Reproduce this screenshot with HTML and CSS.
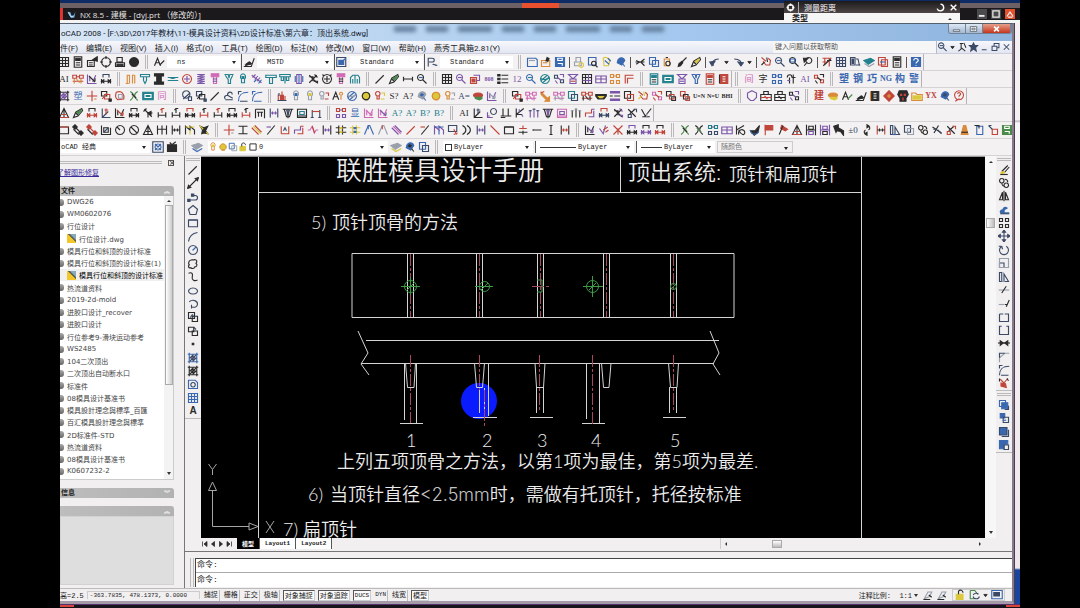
FILE: index.html
```html
<!DOCTYPE html>
<html lang="zh-CN">
<head>
    <meta charset="UTF-8">
    <meta name="viewport" content="width=device-width, initial-scale=1.0">
    <title>AutoCAD 2008</title>
    <link rel="stylesheet" href="styles.css">
</head>
<body>
<div class="desktop">
    <div class="nx">
        <div class="nx-top"><span class="red-mark"></span></div>
        <div class="nx-title">
            <svg class="nx-logo" viewBox="0 0 16 16"><path d="M1 4l5 1 2 6 4-1 3-6-2 10-6 1z" fill="#6fb4e8"/><path d="M2 5l4 7 5 1" stroke="#fff" fill="none"/></svg>
            <span>NX 8.5 - 建模 - [dyj.prt （修改的）]</span>
            <div class="nx-buttons">
                <button aria-label="最小化"><svg viewBox="0 0 16 16"><path d="M3 11h9" stroke-width="3"/></svg></button>
                <button aria-label="还原"><svg viewBox="0 0 16 16"><path d="M3 3h10v10H3z" stroke-width="2"/></svg></button>
                <button class="nx-close" aria-label="关闭"><svg viewBox="0 0 16 16"><path d="M3 12l5-7 5 7M5 13h7" stroke-width="2"/></svg></button>
            </div>
        </div>
        <div class="measure">
            <div class="measure-title">
                <svg viewBox="0 0 16 16"><circle cx="8" cy="8" r="5"/><path d="M8 1v4M8 11v4M1 8h4M11 8h4"/></svg>
                <span class="measure-name">测量距离</span>
                <button aria-label="重置"><svg viewBox="0 0 16 16"><path d="M8 2a6 6 0 1 1-6 8"/></svg></button>
                <button aria-label="关闭"><svg viewBox="0 0 16 16"><path d="M3 3l10 10M13 3L3 13"/></svg></button>
            </div>
            <div class="measure-body"><span>类型</span><i class="up"></i></div>
        </div>
    </div>

    <div class="stage">
    <div class="acad">
        <div class="titlebar">
            <span class="title-text">oCAD 2008 - [F:\3D\2017年教材\11-模具设计资料\2D设计标准\第六章：顶出系统.dwg]</span>
            <div class="glass"><i></i><i></i><i></i><i></i><i></i><i></i><i></i><i></i></div>
            <div class="win-buttons">
                <button aria-label="最小化"><svg viewBox="0 0 16 10"><path d="M4 6h8v2H4z"/></svg></button>
                <button aria-label="还原"><svg viewBox="0 0 16 10"><path d="M4 2h8v6H4zM6 4h4v2H6z"/></svg></button>
                <button class="win-close" aria-label="关闭"><svg viewBox="0 0 16 10"><path d="M5 2l6 6M11 2L5 8"/></svg></button>
            </div>
        </div>

        <div class="menubar">
            <button>件(F)</button><button>编辑(E)</button><button>视图(V)</button><button>插入(I)</button><button>格式(O)</button><button>工具(T)</button><button>绘图(D)</button><button>标注(N)</button><button>修改(M)</button><button>窗口(W)</button><button>帮助(H)</button><button>燕秀工具箱2.81(Y)</button>
            <input class="ask" type="text" placeholder="键入问题以获取帮助" aria-label="键入问题以获取帮助">
            <div class="tools ask-tools" data-tools="zoom:n drop:k person:k star:n wmin:n wmax:n wclose:n"></div>
        </div>

        <div class="row">
            <div class="tools" data-tools="table:k calc:k props:k clock:k stampdoc:k globe:k"></div>
            <div class="grip"></div>
            <div class="tools" data-tools="Apen:k"></div>
            <div class="combo w70"><select aria-label="文字样式"><option>ns</option></select></div>
            <div class="tools bar-left" data-tools="dimpen:k"></div>
            <div class="combo w74"><select aria-label="标注样式"><option>MSTD</option></select></div>
            <div class="tools bar-left" data-tools="tablepen:n:b"></div>
            <div class="combo w70"><select aria-label="表格样式"><option>Standard</option></select></div>
            <div class="tools bar-left" data-tools="leader:n"></div>
            <div class="combo w70"><select aria-label="引线样式"><option>Standard</option></select></div>
            <div class="grip"></div>
            <div class="tools" data-tools="doc:b:s folder:o:k save:b | print:s:y preview:b:k publish:y:b globe3:b | cut:k copy:b paste:o:k brush:k pencil:k:y | undo:n drop:k redo:n drop:k | hand:r:k zoom:n:b zoombox:k:b zoomprev:k | propsheet:r:k table:n pages:n layers:t:s markup:r:b calc:k | help:b"></div>
            <div class="row-end"></div>
        </div>

        <div class="row">
            <div class="tools" data-tools="=AI:k blocks:r:o graph:p:k dim:k:n"></div>
            <div class="grip"></div>
            <div class="tools" data-tools="posts:o pin:t beam:k equals:t cross:r:p coil:p screw:m:p wye:t bulb:t spring:p:b tee:t tees:t barrel:p:b gear:k target:k screw:m:k pipe:t"></div>
            <div class="grip"></div>
            <div class="tools" data-tools="line:k pencil:k:g dimline:k zoom:k:b"></div>
            <div class="grip"></div>
            <div class="tools" data-tools="table:k zoom:p cube:r:p =808:p list:k =12:p zoom:b:t globe2:t nodes:n:p stamp:p:r table:k:p table2:p tiles:o corner:r"></div>
            <div class="grip"></div>
            <div class="tools" data-tools="calc:t:k screen:t:k stamp:p wye:b calc:r:k book:r:k"></div>
            <div class="row-end"></div>
            <div class="grip"></div>
            <div class="tools" data-tools="=间:m =字:k tiles:b wrench:k:p =AI:p:r nodes:r:k"></div>
            <div class="grip"></div>
            <div class="tools strong" data-tools="=塑:b =钢:b =巧:b =NG:b =构:b =警:b"></div>
            <div class="row-end"></div>
        </div>

        <div class="row">
            <div class="tools" data-tools="hatch:k:p =塑:b plus:r:o copyset:k:r arcbox:r:s mirror:g:k screen:t:n =同:m"></div>
            <div class="grip"></div>
            <div class="tools" data-tools="circleset:n copyset:n:k line:k cloud:n fillet:b:n fillet:b"></div>
            <div class="grip"></div>
            <div class="tools" data-tools="hist:r:n bulb:s:b bulb:s:y bulbset:s:r Abulb:k:o globe2:b:s ball:y:k bulbset:r:y =S?:k =A?:k globe3:s:b ball:y:o bulbset:o:s =A=:n:y disc:r:g graph:p:s"></div>
            <div class="grip"></div>
            <div class="tools" data-tools="copyset:k:r blocks:m brushdown:o:r blocks:m:s copy:t:n blocks:r:k bowl:k:y bars:p:k copy:k:r hand:r:y nodes:m:r cubeset:k:r cubeset:r:k =U=N:k =N=U:k =BHI:k"></div>
            <div class="grip"></div>
            <div class="tools" data-tools="shield:p case:k:r case:k nodes:k:p"></div>
            <div class="grip"></div>
            <div class="tools strong" data-tools="=建:r disc:o:y Apen:k:g dimpen:k:g book:k:o diamond:r:o skull:k:r folder2:o:y =YX:r globe3:b:n bubble:r"></div>
            <div class="row-end"></div>
        </div>

        <div class="row">
            <div class="tools" data-tools="tri:k:r pencil:k:g dim:r:k axis:n:r graph:k:r dim:k dimang:k dimup:k:r dimup:k dim:k:r dimup:r:k dimup:k:r dim:k dimup:r:k comb:k dimgap:n:p funnel:k:n cube2:k:t gate:n:r"></div>
            <div class="grip"></div>
            <div class="tools" data-tools="tiles:r:p =显:b graph:m graph:m:p =A?:t =A?:t =B?:t =B?:t"></div>
            <div class="grip"></div>
            <div class="tools" data-tools="=AI:k axis:k:n circset:n:p fork:k:n ray:k:p posts2:p:n funnel:k:p cube2:m:p posts2:k:s joint:r:p dim:n:r gear:k:p scissor:k:n check:k:s"></div>
            <div class="row-end"></div>
        </div>

        <div class="row">
            <div class="tools" data-tools="rect:k:r nodeline:k nodeline:r:k graphbox:k:n dial:k dial2:k tri:k comb2:k dimgap:k flag2:k:y gearpen:k:y"></div>
            <div class="grip"></div>
            <div class="tools" data-tools="plus:r:s ibeam:k hatchl:r:y slash:k:p gate2:r:n joint:p:r zig:m:r dimgap:k:p track:k:y track:y:b peak:b peak:s:r hatchl:p:m line:r:k slash:k:r flag2:p:b rectdown:n:r arcs:k:r dimgap:n:p backslash:r rect:k plusminus:r:k minus:k bar:k dimgap:k:r"></div>
            <div class="grip"></div>
            <div class="tools" data-tools="graph:k:p raydot:p:r star6:r dim:k:p dim:p:k dim:r:k"></div>
            <div class="grip"></div>
            <div class="tools" data-tools="mirror:g:k mirror:k:g tiles:t:n table2:p graphk:k bird:k:b flag:r flagk:r:k tri:k:r tiles2:k:p tiles2:p:k arrowul:k =±0:n:r swap:k dimgap:r:k stretch:n:b copy:n:s rings:k gearx:k:n scissor:k:r cone:o:k docblue:b:k link:r:n save:g:k"></div>
        </div>

        <div class="row">
            <div class="combo space"><select aria-label="工作空间"><option>oCAD 经典</option></select></div>
            <div class="tools" data-tools="gearbox:n:b screenk:k"></div>
            <div class="grip"></div>
            <div class="tools" data-tools="layers:s:b"></div>
            <div class="combo layer">
                <div class="tools layer-state" data-tools="bulb:o:y ball:y:o copy:b:s lock:y:k square:k"></div>
                <select aria-label="图层"><option>0</option></select>
            </div>
            <div class="tools" data-tools="layers:s:y globe3:b:k copy:b:n"></div>
            <div class="grip"></div>
            <div class="combo w90"><span class="swatch"></span><select aria-label="颜色"><option>ByLayer</option></select></div>
            <div class="combo bar-left w100"><span class="dash"></span><select aria-label="线型"><option>ByLayer</option></select></div>
            <div class="combo bar-left w80"><span class="dash short"></span><select aria-label="线宽"><option>ByLayer</option></select></div>
            <div class="combo w74 off"><select aria-label="打印样式" disabled><option>随颜色</option></select></div>
        </div>

        <div class="main">
            <div class="panel">
                <div class="panel-top"><span></span><button aria-label="关闭">×</button></div>
                <a class="panel-link" href="#">了解图形修复</a>
                <div class="section">文件<b>︽</b></div>
                <div class="tree-box">
                    <ul class="tree">
                        <li>DWG26</li>
                        <li>WM0602076</li>
                        <li>行位设计</li>
                        <li class="dwg">行位设计.dwg</li>
                        <li>模具行位和斜顶的设计标准</li>
                        <li>模具行位和斜顶的设计标准(1)</li>
                        <li class="dwg current">模具行位和斜顶的设计标准</li>
                        <li>热流道资料</li>
                        <li>2019-2d-mold</li>
                        <li>进胶口设计_recover</li>
                        <li>进胶口设计</li>
                        <li>行位参考9-滑块运动参考</li>
                        <li>WS2485</li>
                        <li>104二次顶出</li>
                        <li>二次顶出自动断水口</li>
                        <li>标准件</li>
                        <li>08模具设计基准书</li>
                        <li>模具設計理念與標準_百匯</li>
                        <li>百汇模具設計理念與標準</li>
                        <li>2D标准件-STD</li>
                        <li>热流道资料</li>
                        <li>08模具设计基准书</li>
                        <li>K0607232-2</li>
                        <li>K0607193-2</li>
                    </ul>
                    <div class="tree-scroll"><i class="up"></i><span></span><i class="down"></i></div>
                </div>
                <div class="section info">信息<b>︾</b></div>
                <div class="section blank"><b>︽</b></div>
                <div class="preview"></div>
            </div>

            <div class="right">
                <div class="work">
                    <div class="side">
                        <div class="grip-h"></div>
                        <div class="tools draw" data-tools="line:k xline:k pline:n poly:n rect:n arc:n circle:n:b cloud2:k spline:k ellipse:n earc:n insert:k:n block:k:n point:k hatch:b:n hatch:k region:b:n table:b =A:k"></div>
                    </div>
                    <div class="view">
                        <svg class="canvas" viewBox="201 157 784 382" preserveAspectRatio="xMinYMin slice">
                            <g class="white">
                                <path d="M258.5 157V539M861.5 157V539M258 192.5H861M620.5 157V192"/>
                                <path d="M352 253.5H734V317.5H352z"/>
                                <path d="M407.5 254V317M413.5 254V317M476.5 254V317M482.5 254V317M537.5 254V317M543.5 254V317M603.5 254V317M609.5 254V317M670.5 254V317M676.5 254V317"/>
                                <path d="M366 340.5H719M361 363.5H714M358 331L368 353L361 364L369 375M710 331L719 353L713 364L720 375"/>
                            </g>
                            <circle class="spot" cx="479" cy="401" r="18"/>
                            <g class="white">
                                <path d="M404.5 363V420M416.5 363V423M400 423.5H423M405.5 363L407.5 387.5H414L415.5 363"/>
                                <path d="M474.5 363L476.5 387.5H482.5L484.5 363M479.5 390V413M488.5 363V416M473 417.5H497M484.5 388V416"/>
                                <path d="M535 363L536.5 387.5H543.5L545 363M536.5 387V413M543.5 387V413M530 417.5H553"/>
                                <path d="M586.5 363V419M599.5 363V423M582 423.5H605M601.5 363L603.5 387.5H609L611 363"/>
                                <path d="M668.5 363L670.5 387.5H677L678.5 363M669.5 387V413M676.5 387V413M663 417.5H686"/>
                            </g>
                            <path class="center" d="M410.5 254V317M479.5 254V317M540.5 254V317M606.5 254V317M673.5 254V317M410.5 355V423M479.5 355V390M484.5 390V426M539.5 355V412M592.5 355V426M673.5 355V412M532 286.5H550"/>
                            <g class="mark">
                                <path d="M401 286.5H420M410.5 277V295M475 286.5H493M592.5 276V297M583 286.5H603M537 280H542V292H537"/>
                                <circle cx="410.5" cy="286.5" r="6"/><circle cx="484.5" cy="286.5" r="5"/><circle cx="592.5" cy="286.5" r="6"/><circle cx="673.5" cy="286.5" r="3"/>
                                <path d="M407 290L414 283M481 290L488 283M589 290L596 283M671 289L676 284"/>
                            </g>
                            <g class="ucs">
                                <path d="M212.5 490V526.5H249M212.5 482L208.5 490.5H216.5zM258 526.5L249 523V530z"/>
                                <path d="M208.5 464L212.5 469.5V475M216.5 464L212.5 469.5M266 521L274 533M274 521L266 533"/>
                            </g>
                            <g class="drawing-text">
                                <text class="big" x="336" y="180">联胜模具设计手册</text>
                                <text class="mid" x="628" y="180">顶出系统:</text>
                                <text x="729" y="181">顶针和扁顶针</text>
                                <text x="311" y="229">5)</text><text x="332" y="229">顶针顶骨的方法</text>
                                <text x="406" y="447">1</text><text x="482" y="447">2</text><text x="537" y="447">3</text><text x="591" y="447">4</text><text x="670" y="447">5</text>
                                <text x="337" y="468">上列五项顶骨之方法，以第1项为最佳，第5项为最差.</text>
                                <text x="308" y="501">6)</text><text x="330" y="501">当顶针直径<tspan class="size">&lt;2.5mm</tspan>时，需做有托顶针，托径按标准</text>
                                <text x="283" y="536">7)</text><text x="303" y="536">扁顶针</text>
                            </g>
                        </svg>
                        <div class="tabs">
                            <div class="tools tab-nav" data-tools="first:k prev:k next:k last:k"></div>
                            <button class="tab active">模型</button>
                            <button class="tab">Layout1</button>
                            <button class="tab">Layout2</button>
                            <div class="hscroll"><i class="left"></i><span></span><i class="rightarrow"></i></div>
                        </div>
                    </div>
                    <div class="vscroll"><i class="up"></i><span></span><i class="down"></i></div>
                    <div class="side">
                        <div class="grip-h"></div>
                        <div class="tools modify" data-tools="erase:k:y rings:k mirr:k offset:n:b array:k move:n:b rotate:n scale:n:s stretch:n:s trim:s:k extend:s:k breakpt:n break:n join:k chamfer:s:n fillet:n explode:r:k"></div>
                        <div class="grip-h"></div>
                        <div class="tools order" data-tools="front:b:n back:b:n front2:n:b back2:b:n"></div>
                    </div>
                </div>
                <div class="command">
                    <div class="cmd-grip"></div>
                    <div class="cmd-lines">
                        <div class="cmd-old">命令:</div>
                        <label class="cmd-new">命令:<input type="text" aria-label="命令"></label>
                    </div>
                </div>
            </div>
        </div>

        <div class="status">
            <span>高=2.5</span>
            <span class="coords">-363.7835, 478.1373, 0.0000</span>
            <button>捕捉</button><button>栅格</button><button>正交</button><button>极轴</button><button class="on">对象捕捉</button><button class="on">对象追踪</button><button class="on latin">DUCS</button><button class="latin">DYN</button><button>线宽</button><button class="on">模型</button>
            <div class="scale">注释比例: &nbsp;1:1<i class="down"></i></div>
            <div class="tools" data-tools="annot:s:k annot:s:k"></div>
            <div class="tools tray" data-tools="lock:y:k docsync:g:n drop:k screenb:b:n"></div>
        </div>
    </div>
    <div class="behind"></div>
    </div>
    <div class="bottom"><i></i><i></i></div>
</div>
<script src="script.js"></script>
</body>
</html>
```

FILE: styles.css
```css
*{
    box-sizing: border-box;
}
body{
    margin: 0;
    background-color: black;
    font-family: Roboto, "Noto Sans CJK SC", sans-serif;
    font-size: 8px;
    color: #222;
}
button, input, select{
    font: inherit;
    color: inherit;
    border: none;
    background: none;
    padding: 0;
    margin: 0;
}
svg{
    display: block;
}
.desktop{
    margin: 0 60px;
    height: 100vh;
    display: flex;
    flex-direction: column;
    overflow: hidden;
}

/* NX window at the back */
.nx{
    position: relative;
    flex: none;
    height: 23px;
    background-color: #f4f4f4;
}
.nx-top{
    height: 8px;
    background-color: #6c6064;
    border-top: 3px solid #0e2b66;
}
.red-mark{
    display: block;
    width: 37px;
    height: 5px;
    margin: 0 auto;
    background-color: #e8502f;
}
.nx-title{
    height: 12px;
    display: flex;
    align-items: center;
    gap: 4px;
    padding: 0 1px 0 4px;
    background-color: #1b191b;
    color: #e4e4e4;
    font-family: "Open Sans", "Noto Sans CJK SC", sans-serif;
    border-left: 3px solid #d33;
}
.nx-logo{
    width: 9px;
    height: 10px;
}
.nx-buttons{
    margin-left: auto;
    margin-right: 4px;
    display: flex;
    gap: 4px;
}
.nx-buttons button{
    width: 10px;
    height: 10px;
    background-color: #4a4a4c;
}
.nx-buttons svg{
    width: 10px;
    height: 10px;
    fill: none;
    stroke: #eee;
}
.nx-buttons .nx-close{
    background-color: #e2502c;
}
.measure{
    position: absolute;
    top: 1px;
    right: 60px;
    width: 176px;
    background-color: #f6f6f6;
}
.measure-title{
    height: 12px;
    display: flex;
    align-items: center;
    padding: 0 2px;
    background: linear-gradient(#1c1a1b, #4e4646);
    color: white;
}
.measure-title svg{
    width: 9px;
    height: 9px;
    fill: none;
    stroke: white;
    stroke-width: 2.5;
}
.measure-name{
    flex: 1;
    margin-left: 3px;
    padding-left: 5px;
    border-left: 1px solid #aaa;
}
.measure-title button{
    margin-left: 4px;
}
.measure-body{
    display: flex;
    align-items: center;
    justify-content: space-between;
    padding: 1px 8px 0;
    line-height: 9px;
    font-weight: bold;
}

/* AutoCAD window */
.stage{
    position: relative;
    flex: 1;
    min-height: 0;
    display: flex;
}
.acad{
    flex: 1;
    min-width: 0;
    display: flex;
    flex-direction: column;
    background-color: #f1eff0;
    border-top: 1px solid #55606e;
    border-right: 2px solid #85798a;
    border-bottom: 3px solid #a49aa8;
    overflow: hidden;
}
.titlebar{
    flex: none;
    height: 17px;
    display: flex;
    align-items: center;
    background: linear-gradient(90deg, #d8e6f4, #bcd6f0 32%, #a6caf0 60%, #8fb4dd);
    color: #16202c;
}
.title-text{
    padding-left: 1px;
    white-space: nowrap;
}
.glass{
    align-self: flex-start;
    display: flex;
    gap: 10px;
    margin: 2px 0 0 26px;
    filter: blur(2px);
}
.glass i{
    width: 22px;
    height: 6px;
    background-color: #64809f;
}
.glass i:nth-child(3n){
    width: 34px;
}
.win-buttons{
    align-self: flex-start;
    margin-left: auto;
    display: flex;
    border: 1px solid #71849b;
    border-top: none;
    border-radius: 0 0 3px 3px;
    overflow: hidden;
}
.win-buttons button{
    width: 17px;
    height: 9px;
    background: linear-gradient(#dde8f4, #a3b8d0);
    border-right: 1px solid #71849b;
}
.win-buttons svg{
    width: 15px;
    height: 8px;
    fill: white;
    stroke: #4e5a68;
}
.win-buttons .win-close{
    width: 28px;
    background: linear-gradient(#e7a08d, #c5351b);
}
.win-close svg{
    margin: 0 auto;
    stroke: white;
    stroke-width: 2;
}
.menubar{
    flex: none;
    height: 13px;
    display: flex;
    align-items: center;
    gap: 8px;
    background: linear-gradient(#f7f8fc, #e3e6f2);
    border-bottom: 1px solid #cdd0dc;
    white-space: nowrap;
}
.menubar .ask{
    margin-left: auto;
    width: 163px;
    height: 11px;
    padding-left: 2px;
    background-color: #f6f6f6;
    font-size: 7px;
}
.ask::placeholder{
    color: #555;
}
.menubar .ask-tools{
    margin-left: -8px;
    border-left: 1px solid #b8bcc8;
}
.menubar .ask-tools button{
    width: 11px;
}

.row{
    flex: none;
    height: 17px;
    display: flex;
    align-items: stretch;
    background-color: #f3f1f2;
    border-bottom: 1px solid #d6d3d6;
}
.row > .tools:first-child{
    margin-left: -3px;
}
.tools{
    flex: none;
    display: flex;
    align-items: center;
}
.tools button{
    flex: none;
    width: 14px;
    height: 14px;
    display: flex;
    align-items: center;
    justify-content: center;
    color: var(--c1);
    font-family: "Liberation Serif", "Noto Sans CJK SC", serif;
    font-size: 9px;
    line-height: 14px;
    white-space: nowrap;
}
.tools button.wide{
    font-size: 6px;
    font-weight: bold;
}
.tools button.narrow{
    width: 9px;
}
.tools.strong button{
    font-size: 10px;
    font-weight: bold;
}
.tools.strong button.pair{
    font-size: 8px;
}
.tools svg{
    width: 12px;
    height: 12px;
    fill: none;
    stroke: var(--c1);
    stroke-width: 1.5;
}
.tools .f{
    fill: var(--c1);
}
.tools .a{
    stroke: var(--c2);
}
.tools .af{
    fill: var(--c2);
    stroke: none;
}
.tools .w{
    stroke: white;
}
.sep{
    flex: none;
    width: 1px;
    height: 11px;
    margin: 0 2px;
    background-color: #555;
}
.grip{
    flex: none;
    width: 3px;
    margin: 1px 4px;
    border-left: 1px solid #bbb8bc;
    border-right: 1px solid #bbb8bc;
}
.grip-h{
    height: 3px;
    margin: 2px 1px;
    border-top: 1px solid #bbb8bc;
    border-bottom: 1px solid #bbb8bc;
}
.row-end{
    width: 1px;
    background-color: #b5b2b6;
}
.row-end + .grip{
    margin-left: 3px;
}
.bar-left{
    border-left: 1px solid #555;
}
.combo{
    position: relative;
    flex: none;
    display: flex;
    align-items: center;
    margin: 2px 1px;
    background-color: white;
}
.combo select{
    flex: 1;
    min-width: 0;
    height: 12px;
    padding-left: 10px;
    appearance: none;
    font-family: "Liberation Mono", "Noto Sans CJK SC", monospace;
    font-size: 7px;
    opacity: 1;
}
.combo::after{
    content: "";
    position: absolute;
    right: 4px;
    top: 5px;
    border: 2px solid transparent;
    border-top: 3px solid #222;
}
.w70{
    width: 73px;
}
.w74{
    width: 76px;
}
.w80{
    width: 79px;
}
.w90{
    width: 90px;
}
.w100{
    width: 99px;
}
.combo.space{
    width: 89px;
}
.combo.space select{
    padding-left: 0;
}
.combo.layer{
    width: 180px;
    margin-left: 4px;
}
.layer select{
    padding-left: 1px;
}
.layer-state button{
    width: 10px;
}
.layer-state svg{
    width: 10px;
    height: 10px;
}
.swatch{
    width: 7px;
    height: 7px;
    margin-left: 2px;
    border: 1px solid #333;
}
.swatch + select{
    padding-left: 2px;
}
.dash{
    width: 36px;
    height: 1px;
    margin-left: 4px;
    background-color: #333;
}
.dash.short{
    width: 21px;
}
.dash + select{
    padding-left: 2px;
}
.off{
    background-color: #f3f1f2;
    border: 1px solid #ccc;
    color: #777;
}
.off select{
    padding-left: 3px;
}

/* recovery panel on the left */
.main{
    flex: 1;
    min-height: 0;
    display: flex;
}
.panel{
    flex: none;
    width: 125px;
    display: flex;
    flex-direction: column;
    padding: 2px 10px 3px 0;
    border-right: 1px solid #777;
    font-family: "DejaVu Sans", "Noto Sans CJK SC", sans-serif;
    font-size: 7px;
}
.panel-top{
    display: flex;
    align-items: center;
    gap: 6px;
    height: 9px;
}
.panel-top span{
    flex: 1;
    height: 3px;
    border-top: 1px solid #bbb;
    border-bottom: 1px solid #bbb;
}
.panel-top button{
    width: 6px;
    height: 6px;
    line-height: 5px;
    border: 1px solid #555;
}
.panel-link{
    height: 19px;
    margin-left: -3px;
    line-height: 12px;
    color: #3a2a9a;
    white-space: nowrap;
}
.section{
    flex: none;
    display: flex;
    height: 10px;
    padding: 0 4px 0 1px;
    line-height: 10px;
    font-weight: bold;
    background: linear-gradient(90deg, #bdbdbd, #b2b2b2);
    border-radius: 0 3px 0 0;
}
.section b{
    color: #eee;
    margin-left: auto;
    font-size: 6px;
}
.tree-box{
    flex: none;
    height: 284px;
    display: flex;
    background-color: white;
    border-right: 1px solid #ccc;
    border-bottom: 1px solid #ccc;
    overflow: hidden;
}
.tree{
    flex: 1;
    min-width: 0;
    margin: 0;
    padding: 0;
    list-style: none;
    overflow: hidden;
}
.tree li{
    display: flex;
    align-items: center;
    gap: 3px;
    height: 12px;
    white-space: nowrap;
    color: #444;
}
.tree li:nth-child(4n){
    height: 13px;
}
.tree li::before{
    content: "";
    flex: none;
    width: 4px;
    height: 7px;
    border-radius: 0 3px 3px 0;
    background: linear-gradient(#aaa, #666);
}
.tree .dwg::before{
    width: 9px;
    height: 9px;
    margin-left: 7px;
    border-radius: 0;
    background: linear-gradient(45deg, #f2c72c 55%, #333 56%, #8ab 70%);
}
.tree .current{
    color: black;
    background-color: #f0f0f0;
}
.tree-scroll{
    flex: none;
    width: 9px;
    display: flex;
    flex-direction: column;
    align-items: center;
    padding: 4px 0;
    background-color: #f3f3f3;
}
.tree-scroll span{
    width: 8px;
    height: 180px;
    margin: 3px 0 auto;
    background: linear-gradient(90deg, #fff, #ccc);
    border: 1px solid #aaa;
}
.up, .down, .left, .rightarrow{
    flex: none;
    width: 0;
    height: 0;
    border: 2px solid transparent;
}
.up{
    border-top: none;
    border-bottom-color: #333;
}
.down{
    border-bottom: none;
    border-top: 3px solid #333;
}
.left{
    border-left: none;
    border-right-color: #333;
}
.rightarrow{
    border-right: none;
    border-left-color: #333;
}
.info, .blank{
    margin-top: 8px;
}
.preview{
    flex: 1;
    background-color: #dedede;
    border: 1px solid #d2d2d2;
}

/* drawing area */
.right{
    flex: 1;
    min-width: 0;
    display: flex;
    flex-direction: column;
}
.work{
    flex: 1;
    min-height: 0;
    display: flex;
    border-bottom: 1px solid #777;
}
.side{
    flex: none;
    width: 16px;
}
.side .tools{
    flex-direction: column;
    border-bottom: 1px solid #bbb;
}
.side .tools button{
    flex: 1;
    height: auto;
    font-family: "Liberation Sans", sans-serif;
    font-size: 10px;
    font-weight: bold;
    line-height: 10px;
}
.draw{
    height: 256px;
}
.modify{
    height: 228px;
}
.order{
    height: 55px;
}
.view{
    flex: 1;
    min-width: 0;
    display: flex;
    flex-direction: column;
    border-top: 1px solid #999;
}
.canvas{
    flex: 1;
    min-height: 0;
    width: 100%;
    background-color: black;
}
.white{
    fill: none;
    stroke: #d4d4d4;
}
.spot{
    fill: #0a1cff;
}
.center{
    fill: none;
    stroke: #a8485c;
    stroke-dasharray: 12 2 3 2;
}
.mark{
    fill: none;
    stroke: #3f9a45;
}
.ucs{
    fill: none;
    stroke: #a5a5a5;
}
.drawing-text{
    font-family: Lato, "Noto Sans CJK SC", sans-serif;
    font-weight: 350;
    font-size: 18px;
    fill: #ececec;
}
.drawing-text .big{
    font-size: 26px;
}
.drawing-text .mid{
    font-size: 22px;
}
.size{
    font-family: Inter, sans-serif;
    font-weight: 300;
    fill: #c4c4c4;
}
.tabs{
    flex: none;
    height: 13px;
    display: flex;
    padding-bottom: 2px;
}
.tab-nav button{
    width: 8px;
    height: 10px;
}
.tab-nav svg{
    width: 8px;
    height: 8px;
}
.tab{
    padding: 0 5px;
    font-family: "Liberation Mono", "Noto Sans CJK SC", monospace;
    font-size: 6px;
    font-weight: bold;
    background-color: white;
    border-right: 1px solid #555;
}
.tab.active{
    margin-left: 4px;
    background-color: black;
    color: white;
}
.hscroll{
    flex: 1;
    display: flex;
    align-items: center;
    margin-left: 388px;
    border-left: 1px solid #ccc;
    padding: 0 4px;
}
.hscroll span{
    width: 10px;
    height: 8px;
    margin-left: 45px;
    margin-right: auto;
    background: linear-gradient(#fff, #bbb);
    border: 1px solid #aaa;
}
.vscroll{
    flex: none;
    width: 11px;
    display: flex;
    flex-direction: column;
    align-items: center;
    margin-bottom: 13px;
    padding: 5px 0 4px;
    background-color: #f7f7f7;
}
.vscroll span{
    width: 9px;
    height: 10px;
    margin-top: 55px;
    margin-bottom: auto;
    background: linear-gradient(90deg, #fff, #bbb);
    border: 1px solid #aaa;
}

/* command lines and status */
.command{
    flex: none;
    height: 36px;
    display: flex;
    padding: 6px 0 1px 5px;
}
.cmd-grip{
    width: 4px;
    border-left: 1px solid #bbb;
    border-right: 1px solid #bbb;
    margin-right: 1px;
}
.cmd-lines{
    flex: 1;
    background-color: white;
    border-left: 1px solid #444;
    border-top: 1px solid #444;
    font-family: "Liberation Mono", "Noto Sans CJK SC", monospace;
}
.cmd-old, .cmd-new{
    display: flex;
    height: 14px;
    padding-left: 1px;
    line-height: 12px;
    border-bottom: 1px solid #aaa;
}
.cmd-new{
    border-bottom: none;
    line-height: 14px;
}
.cmd-new input{
    flex: 1;
}
.status{
    flex: none;
    height: 13px;
    display: flex;
    align-items: center;
    gap: 3px;
    padding-right: 7px;
    border-top: 1px solid #bbb;
    font-family: "Liberation Mono", "Noto Sans CJK SC", monospace;
    font-size: 7px;
    white-space: nowrap;
}
.coords{
    width: 113px;
    padding-left: 2px;
    border: 1px solid #ccc;
    border-bottom: none;
    font-size: 6px;
}
.status > button{
    padding: 0 1px;
    height: 11px;
    line-height: 10px;
    border-right: 1px solid #bbb;
}
.status > .on{
    border: 1px solid #555;
    border-right-color: #ccc;
    border-bottom-color: #ccc;
    background-color: #fafafa;
}
.status > .latin{
    font-size: 6px;
}
.scale{
    display: flex;
    align-items: center;
    gap: 2px;
    margin-left: auto;
}
.tray{
    border: 1px solid #ccc;
    height: 12px;
}

/* slice of the window behind, and the bottom edge */
.behind{
    flex: none;
    width: 6px;
    border-left: 1px solid #4a3f4c;
    background: linear-gradient(#f3eff2 97px, #b9b0bb 98px, #f8f6f8 100px, #eee6ec 545px, #1745a0 547px);
}
.bottom{
    flex: none;
    height: 4px;
    display: flex;
    justify-content: space-between;
    background-color: #17141c;
    border-top: 1px solid #55306a;
}
.bottom i{
    width: 14px;
    height: 2px;
    background-color: #d8433a;
}
```

FILE: script.js
```js
const colors = {
    k: '#2b2b2b', n: '#3a4a66', b: '#3a68b0', t: '#23808e', g: '#4a8a4a', r: '#c0453a',
    o: '#d98a3a', y: '#dcc83c', m: '#cf6ab4', p: '#7a55a8', s: '#98a0ac'
};

// plain strokes use the first colour, a: accent stroke, f: filled, af: accent filled, w: white stroke
const shapes = {
    line: 'M2 14L13 3', xline: 'M1 15L15 1 f:M1 15l1-4 3 3zM15 1l-1 4-3-3z', slash: 'M3 14L13 2 a:M2 4h6', backslash: 'M2 2L14 14',
    pline: 'M2 12h9a3 3 0 0 0 0-6H7 f:M1 11h3v3H1zM6 4h3v3H6z', poly: 'M8 2l6 5-2 7H4L2 7z', rect: 'M2 4h12v9H2z a:M2 4h12',
    arc: 'M2 14C3 7 7 3 14 2', circle: 'M8 2a6 6 0 1 0 .1 0 a:M8 8l4-4M7 8h2',
    cloud2: 'M5 3c2-2 3 1 5-1 3 0 4 3 2 5 3 3 0 5-2 5 0 3-4 2-5 1-3 1-4-2-2-4-2-2 0-6 2-6', spline: 'M2 3c5-2 6 1 5 5s3 6 7 4',
    ellipse: 'M8 4a6 4 0 1 0 .1 0', earc: 'M3 5c5-4 11-1 11 3s-4 5-8 4 M6 9v5', insert: 'M2 2h8v8H2zM7 7h7v7H7z a:M4 9l3-4 3 4',
    block: 'M2 3h7v6H2zM7 8h7v6H7z a:M9 3l3 3', point: 'f:M7 7h2v2H7z', hatch: 'M3 1v14M13 1v14M1 3h14M1 13h14 a:M3 8h10M8 3v10M4 12l8-8M4 8l4-4M8 12l4-4',
    region: 'M2 3h9l3 3v8H2z a:M8 6a3 3 0 1 0 .1 0', table: 'M2 2h12v12H2zM2 6h12M6 2v12 a:M2 10h12M10 2v12', table2: 'M1 4h14v9H1zM1 8h14M8 4v9',
    calc: 'M3 1h10v14H3z f:M5 3h6v3H5z a:M5 9h6M5 12h6', props: 'M2 6h9v8H2zM4 9h5M4 12h5 f:M9 5l6-4v6z', clock: 'M8 2a6 6 0 1 0 .1 0M8 0v4M8 12v4M0 8h4M12 8h4',
    stampdoc: 'M4 2h7v6H4zM2 9h12v5H2z f:M4 11h8v2H4z', globe: 'f:M8 2a6 6 0 1 0 .1 0z a:M3 6h9M4 10h8', globe2: 'M8 2a6 6 0 1 0 .1 0M3 10L11 3M5 13l8-7 a:M2 7c4 3 8 2 12-1',
    globe3: 'f:M4 5c3-4 8-3 9 1l-4 6-6-3z af:M7 4l4 2-3 3-3-2z a:M10 10l3 4', Apen: 'M2 13L6 3l4 10M4 9h5 a:M9 12l6-6', dimpen: 'M1 14h10l4-11 M3 13L9 8l2 2z f:M4 11l4-3 2 3z',
    tablepen: 'M1 2h12v12H1z a:M4 11l9-8 af:M3 5h8v7H3z', leader: 'M3 14V3h5c4 0 4 5 0 5H4M9 12c2-3 3 2 6 0',
    doc: 'M2 3h11l2 2v9H2z a:M4 6h8', folder: 'M2 6h11v8H2z af:M9 1l4 2-2 5-4-1z M4 9h6', folder2: 'M1 4h5l2 2h7v8H1z af:M2 7h12v6H2z', save: 'f:M2 2h12v12H2z w:M5 3h6v3H5z w:M5 10h6v3',
    print: 'M4 2h6v6H4zM2 8h9v5H2z a:M11 9a3 3 0 1 0 .1 0', preview: 'M2 2h10v10H2z a:M9 7a3 3 0 1 0 .1 0M11 12l3 3', publish: 'M3 3c4-3 7 0 9 2l-2 8H4z a:M5 6l6 5M9 3l4 4',
    cut: 'M2 8h12M9 8l5-4M9 8l5 5 M3 6l4 2-4 3', copy: 'M2 2h8v9H2z a:M6 6h8v8H6z', paste: 'M3 4h7v9H3z a:M8 7a3 3 0 1 0 .1 0M5 2h3', brush: 'M14 2L8 8 f:M3 14l1-4 4-3 1 2-3 4z',
    pencil: 'M2 14l3-7 8-5 1 3-6 7z af:M6 7l6-4 1 2-5 6z M5 8l3 3', undo: 'M6 13c-3-5 0-9 7-9 f:M1 8l7-1-4 6z', redo: 'M11 13c3-5-1-9-8-9 f:M15 9l-7-1 4 5z', drop: 'f:M5 7h6l-3 4z',
    hand: 'M2 2l6 5M4 7l4 5h5l1-6-3-3 a:M2 12l4-4M9 2l1 6', zoom: 'M6 2a4 4 0 1 0 .1 0zM9 9l5 5 a:M4 6h5', zoombox: 'M6 2a4 4 0 1 0 .1 0zM9 9l5 5 a:M3 4h6v4H3z', zoomprev: 'M9 2a4 4 0 1 0 .1 0 M3 13l4-5 f:M2 3h6l-5 5z',
    propsheet: 'M2 3h12M5 3v8M11 3v11M2 8h6 a:M3 13l10-9M8 6h6', pages: 'M2 2h6v10H2z f:M4 4h2v6H4z M9 4h3l2 9M9 12h6', layers: 'f:M1 6l9-3 5 3-8 5z a:M2 10l6 4 7-4', markup: 'M2 2h9v10H2zM6 5h8v9H6z a:M4 8h7',
    help: 'f:M2 2h12v12H2z w:M5 6c0-4 6-3 6 0 0 2-3 1-3 4M8 12v1', blocks: 'M1 3h5v4H1zM10 3h5v4h-5zM1 11h14M6 5h4 a:M3 8v6M12 8v6M6 8l4 5', graph: 'M2 2v12h12M5 11V5M9 12L13 3 a:M4 4l8 8M12 11V7',
    dim: 'M2 14V8M14 14V8M2 11h12 f:M2 11l3-2v4zM14 11l-3-2v4z a:M4 6V2h8v4', dimup: 'M3 14V7M13 14V7M3 11h10 a:M8 2v6M6 4l2-2h3', posts: 'M3 14V3h3v11M10 14V3h3M13 3v11M1 14h4', pin: 'M2 2h12v3H2zM6 5v5M10 5v5l-2 4-2-4',
    beam: 'f:M2 1h12v3H2zM2 12h12v3H2zM5 4h6v8H5z', equals: 'M1 6h14M1 10h14 M4 6c4 3 4 1 8 0', cross: 'M8 2a6 6 0 1 0 .1 0 a:M4 8h8M8 4v8', coil: 'M3 2h10L3 5h10L3 8h10L3 11h10L3 14h10', screw: 'f:M3 1h10v4H3z M6 5v9h4V5 a:M5 8h6M5 11h6',
    wye: 'M2 2h5l1 5 1-5h5M3 3l4 6v5h3V9l3-6', bulb: 'M8 1a4 4 0 0 0-2 7v5h4V8a4 4 0 0 0-2-7 af:M6 4h4v4H6z', spring: 'M1 3l13 10M2 6l4-4M5 9l4-5M8 11l4-5 a:M10 14l4-5M4 12l3-3', tee: 'M1 3h14v3H1zM6 6v8h4V6', tees: 'M1 2h14v3H1zM3 5v5h3V5M10 5v5h3V5M8 5v9',
    barrel: 'M5 2h6v12H5z a:M3 4v8M13 4v8M8 2v12', gear: 'M3 3l10 10M3 13L13 3M3 5h5v6 a:M10 2l4 4M9 11h5v3', target: 'M8 2a6 6 0 1 0 .1 0M4 8h8M8 4v8M2 2l2 2M14 2l-2 2', pipe: 'M2 14V6l3-3h7l2 3v8M5 14V8M11 14V8M8 3v11', dimline: 'M2 5v6M14 5v6M2 8h12',
    cube: 'M2 6h8v8H2z a:M6 3h8v7h-4 f:M4 8h4v4H4z', list: 'M6 3h9M6 8h9M6 13h9 f:M1 2h3v2H1zM1 7h3v2H1zM1 12h3v2H1z', nodes: 'M2 3h4v4H2zM10 9h4v4h-4z a:M6 6l5 4M9 2h5v4M3 10l3 4', stamp: 'M2 2h12L8 8zM4 8h8v6H4z a:M5 11h6',
    tiles: 'M2 2h4v4H2zM10 2h4v4h-4z a:M2 10h4v4H2zM10 10h4v4h-4zM6 4h4', tiles2: 'M2 1v14M14 1v14M5 3h6v4H5zM2 8h12 a:M5 10h6v4H5z', corner: 'M3 14V3h11M6 14V7h8', screen: 'f:M1 3h14v10H1z w:M4 6h8v4H4z', screenk: 'f:M2 5h12v9H2z a:M5 2l3 3 5-4',
    screenb: 'M1 2h14v11H1z af:M3 4h9v6H3z', book: 'f:M3 2h10v12H3z w:M6 5h4M6 8h4M6 11h4 a:M2 2v12', wrench: 'M3 6c0-5 7-5 6 0M6 6v8M11 2v12M9 6h5 a:M3 10h4',
    plus: 'M8 1v14M1 8h14 a:M11 12h3', copyset: 'M2 2h7v6H2z a:M6 6h7v6H6zM3 12l6-8 f:M12 12h3v3h-3z', arcbox: 'M3 3c8-3 11 3 10 9l-8 1c-4-3-3-6-2-10 a:M6 6h5v5H6z', mirror: 'M3 2c6 3 5 8 0 12M13 2c-6 3-5 8 0 12 a:M5 5l6 6',
    circleset: 'M7 1a5 5 0 1 0 .1 0M3 12l9-8 M10 9h4v5h-4z', cloud: 'M3 12c-3-4 2-5 3-5 0-6 7-5 6-1M3 13h10M6 7l7 4', fillet: 'M2 15C2 6 6 3 15 3 a:M4 15h10M2 6V2h4', hist: 'M3 14V6M8 14V2M12 14V8 f:M6 7h4v7H6z a:M2 14h12M4 4v4',
    bulbset: 'M5 2a3 3 0 1 0 .1 0M4 8v4h3V8 a:M10 4h4v4M9 12h5', Abulb: 'M1 13L5 3l4 10M3 9h4 a:M12 3a2 2 0 1 0 .1 0M12 8v5', ball: 'f:M8 3a5 5 0 1 0 .1 0z a:M6 13h5 a:M8 3a5 5 0 1 0 .1 0', disc: 'f:M8 4a6 3 0 1 0 .1 0z af:M3 9h11v3l-4 2-6-2z',
    brushdown: 'f:M3 3l8 8 3-2v6H8l2-2-7-7z a:M2 4l5-2', bowl: 'f:M1 6h14v2l-3 4H4L1 8z af:M3 8h10l-3 3H6z', bars: 'f:M2 2h12v2H2zM2 12h12v2H2z a:M1 8h4M7 8h8', cubeset: 'M2 2h6v6H2z a:M6 6h6v6H6z M9 9h5v5H9z',
    shield: 'M8 1l6 3v6l-4 4H6l-4-4V4z', case: 'M1 6h14v8H1zM5 6V2h6v4 a:M1 10h14M6 8l4 4', diamond: 'f:M8 1l7 7-7 7-7-7z af:M8 5l3 3-3 3-3-3z', skull: 'f:M3 1h10l2 5-3 5v4H4v-4L1 6z af:M4 5h3v3H4zM9 5h3v3H9zM7 10h2v4H7z', bubble: 'M8 1a6 6 0 1 0 .1 0M6 5c1-3 5-1 4 1l-2 2v1M8 11v1M6 13l-3 2',
    tri: 'M8 2l6 12H2zM8 2v12 a:M2 14h12M5 10h6', axis: 'M3 2v12h11M3 14l8-8 a:M8 2v8M6 4h5', dimang: 'M3 3l10 10M6 2l-4 4M14 8H8v6 f:M8 8l4-2v4z', comb: 'M2 3h12M2 3v12M6 7v6M10 7v6M14 3v12M4 7h8', comb2: 'M2 2v12M8 2v12M14 2v12M2 7h12',
    dimgap: 'M3 2v12M13 2v12 a:M3 8h10M6 6v4M10 6v4', funnel: 'M1 3h14M3 3l3 10h4l3-10M8 3v12 a:M6 3l2 8 2-8', cube2: 'M2 3h12v11H2z a:M5 6h6v4H5z M2 12h12', gate: 'M3 14V4M13 14V4M1 14h4M11 14h4 a:M3 6h10', gate2: 'M3 13V3M3 13h10V3 a:M6 9l2-4 2 4',
    circset: 'M10 2a4 4 0 1 0 .1 0 a:M2 12h3M2 7v7h7', fork: 'M4 2v10M11 2v10M1 12h14M1 14h6', ray: 'M3 2v12M3 10l10-8M3 10h8 a:M7 3v5M10 10l2 3', posts2: 'M3 4v10M8 2v12M13 4v10 a:M1 5h4M6 3h4M11 5h4', joint: 'M2 13V8h8V3 a:M6 13h7V5M10 3h4',
    scissor: 'M3 3l10 10M12 3L5 9 a:M3 10h4v4H3zM10 3h4v4', check: 'M2 3l5 9 8-10M3 13h10 a:M9 8v6', nodeline: 'M4 4l8 8 f:M1 4l3-3 3 3-3 3zM9 12l3-3 3 3-3 3z a:M2 7l7 7', graphbox: 'M2 2v12h12V5M5 5h6v6H5z a:M5 11l6-6', dial: 'M8 2a6 6 0 1 0 .1 0M8 8L4 4', dial2: 'M8 2a6 6 0 1 0 .1 0M4 4l8 8',
    flag2: 'M2 14V3l6 5V3l6 5v6 a:M2 4h12M8 8v6', gearpen: 'f:M3 3l5 2 5-2-3 6 3 4-5-1-3 1 1-5z a:M2 2l5 5M11 11l3 3', ibeam: 'M2 3h12M2 13h12M8 3v10', hatchl: 'M1 5l9 9M5 2l9 9 a:M3 3l10 10', zig: 'M1 8h3l3-5 3 9 2-4h3 a:M7 3l3 9', track: 'M1 5h14M1 11h14M5 2v12M10 2v12 af:M6 4h4v3H6zM6 9h4v3H6z',
    peak: 'M2 14L7 2h2l5 12 a:M7 2v5', rectdown: 'M2 2h11v8H2z a:M9 7l4 7M9 14l5-2', arcs: 'M2 2c6 3 6 9 0 12M8 2c6 3 6 9 0 12', plusminus: 'M3 6h10M8 2v5 a:M2 11h12M8 9v5', minus: 'M2 8h12M3 7v2', bar: 'M8 2v12M6 2h4M6 14h4', raydot: 'M2 6l5 7 3-11 a:M7 8l6-4M10 11l4-3', star6: 'M2 2l12 12M14 2L2 14M8 6v8',
    graphk: 'M2 2v12M2 8l10-6M5 14c-2-8 8-8 8-3s-5 4-8-3', bird: 'f:M2 9h6l6-7-2 9-5 4z a:M2 9c1 6 10 6 11 0', flag: 'M3 1v14 f:M3 2h10v6H3z', flagk: 'f:M6 2l8 5-3 2-6-3z a:M8 2L3 14', arrowul: 'f:M1 3l6-2v4l7 4v6l-4-5-5-1-1 2z', swap: 'M8 3c4 0 5 3 2 5M8 13c-4 0-5-3-2-5 f:M8 1v4l3-2zM8 15v-4l-3 2z',
    stretch: 'M2 14V2h3v12zM8 14V4l6 10z a:M5 14h4', rings: 'M5 2a3 3 0 1 0 .1 0M11 8a3 3 0 1 0 .1 0M5 8c1 5 2 4 3 4M9 3c4 0 4 2 4 4', gearx: 'M2 4l12 8M4 12l6-10 a:M9 8l5 5M3 7h5', cone: 'f:M6 2h3l3 12H3z a:M3 11h9', docblue: 'M5 3h8v11H5z a:M2 2h6v4', link: 'M7 7h7v7H7z a:M2 2l5 5M2 2h4',
    gearbox: 'M1 1h14v14H1z a:M8 4a4 4 0 1 0 .1 0M4 4l8 8M12 4l-8 8', lock: 'f:M3 7h9v7H3z a:M6 7V3c2-3 6-1 6 2', square: 'M3 3h10v10H3z', star: 'f:M8 2l2 4h4l-3 3 1 5-4-3-4 3 1-5-3-3h4z', person: 'M4 3h5M6 3v8l-4 3M6 9l6 5M10 2l3 7', wmin: 'M4 12h7', wmax: 'M3 7h7v6H3zM6 7V3h7v6h-3', wclose: 'M4 4l8 8M12 4l-8 8',
    erase: 'M13 2L5 10M15 4l-7 8 af:M2 12l5-3 3 2-4 3z M3 14h10', mirr: 'M6 3v10H2zM10 3v10h4zM8 1v14', offset: 'af:M4 13c-4-3 0-6 2-6 1-5 7-4 7-1l-4 2v3h6v2z M3 13h12', array: 'M2 2h4v4H2zM10 2h4v4h-4zM2 10h4v4H2zM10 10h4v4h-4z', move: 'M8 2v12M2 8h12 f:M8 0l2 3H6zM8 16l2-3H6zM0 8l3-2v4zM16 8l-3-2v4z', rotate: 'M5 3a6 6 0 1 0 6 0M5 3l1 4M5 3H1',
    scale: 'M2 8h6v6H2z a:M8 2H2v12h12V2H8', trim: 'M1 8h14 a:M5 12l6-9', extend: 'M1 10h7 a:M9 10h3M11 13l4-9', breakpt: 'M2 4h5M9 4h5v10H2V4', break: 'M5 3H2v11h12V3h-3', join: 'M0 8h16 f:M7 8L3 5v6zM9 8l4-3v6z', chamfer: 'M2 15V9l7-6h6 a:M2 9V3h7', explode: 'M3 3l6 6M13 2L7 9 f:M4 8l6 1 1 5-7-2z a:M12 2l2 3M2 2v4',
    front: 'M2 2h8v8H2z f:M5 5h8v8H5z a:M9 14h5V9', back: 'f:M3 2h6v6H3z a:M7 7h7v7H7z M6 11h5', front2: 'af:M2 2h10v10H2z M5 14h9V5 M2 2h10v10H2z', back2: 'f:M2 2h11v5H8v6H2z a:M8 8h6v6H8z',
    first: 'M3 3v10 f:M12 3v10L6 8z', prev: 'f:M11 3v10L5 8z', next: 'f:M5 3v10l6-5z', last: 'M13 3v10 f:M4 3v10l6-5z', annot: 'M3 13l5-9h5l-3 6z a:M2 14h9M9 8l4 3', docsync: 'M3 2h6l4 5M3 2v11h5 a:M7 10a4 3 0 0 0 8 0M7 8c1-3 5-3 7-1'
};

function drawShape(name)
{
    let out = '';
    shapes[name].split(/ (?=(?:a|f|af|w):|M)/).forEach(part => {
        const at = part.indexOf(':');
        if(at > 0)
        out += `<path class="${part.slice(0, at)}" d="${part.slice(at + 1)}"/>`;
        else
        out += `<path d="${part}"/>`;
    });
    return `<svg viewBox="0 0 16 16">${out}</svg>`;
}

// every data-tools list holds name:colour:accent, =text:colour for letters, | for a divider
document.querySelectorAll('[data-tools]').forEach(bar => {
    bar.dataset.tools.split(' ').forEach(item => {
        if(item === '|')
        {
            bar.insertAdjacentHTML('beforeend', '<span class="sep"></span>');
            return;
        }
        const [name, c1, c2] = item.split(':');
        const button = document.createElement('button');
        button.style.setProperty('--c1', colors[c1]);
        button.style.setProperty('--c2', colors[c2 || c1]);
        button.setAttribute('aria-label', name.replace(/^=/, ''));
        if(name[0] === '=')
        {
            button.textContent = name.slice(1);
            if(name.length > 3)
            button.className = 'wide';
            else if(name.length === 3)
            button.className = 'pair';
        }
        else
        {
            button.innerHTML = drawShape(name);
            if(name === 'drop')
            button.className = 'narrow';
        }
        bar.appendChild(button);
    });
});
```
